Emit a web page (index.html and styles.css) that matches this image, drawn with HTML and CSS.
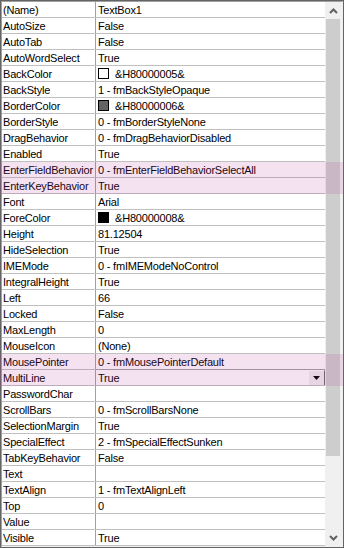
FILE: index.html
```html
<!DOCTYPE html>
<html lang="en">
<head>
  <meta charset="UTF-8">
  <title>Properties - TextBox1</title>
  <link rel="stylesheet" href="styles.css">
</head>
<body>

<div class="window">
  <div class="inner">

    <!-- property grid -->
    <div class="grid">
      <div class="row"><div class="name">(Name)</div><div class="value">TextBox1</div></div>
      <div class="row"><div class="name">AutoSize</div><div class="value">False</div></div>
      <div class="row"><div class="name">AutoTab</div><div class="value">False</div></div>
      <div class="row"><div class="name">AutoWordSelect</div><div class="value">True</div></div>
      <div class="row"><div class="name">BackColor</div><div class="value"><span class="swatch white"></span>&amp;H80000005&amp;</div></div>
      <div class="row"><div class="name">BackStyle</div><div class="value">1 - fmBackStyleOpaque</div></div>
      <div class="row"><div class="name">BorderColor</div><div class="value"><span class="swatch grey"></span>&amp;H80000006&amp;</div></div>
      <div class="row"><div class="name">BorderStyle</div><div class="value">0 - fmBorderStyleNone</div></div>
      <div class="row"><div class="name">DragBehavior</div><div class="value">0 - fmDragBehaviorDisabled</div></div>
      <div class="row"><div class="name">Enabled</div><div class="value">True</div></div>
      <div class="row"><div class="name">EnterFieldBehavior</div><div class="value">0 - fmEnterFieldBehaviorSelectAll</div></div>
      <div class="row"><div class="name">EnterKeyBehavior</div><div class="value">True</div></div>
      <div class="row"><div class="name">Font</div><div class="value">Arial</div></div>
      <div class="row"><div class="name">ForeColor</div><div class="value"><span class="swatch black"></span>&amp;H80000008&amp;</div></div>
      <div class="row"><div class="name">Height</div><div class="value">81.12504</div></div>
      <div class="row"><div class="name">HideSelection</div><div class="value">True</div></div>
      <div class="row"><div class="name">IMEMode</div><div class="value">0 - fmIMEModeNoControl</div></div>
      <div class="row"><div class="name">IntegralHeight</div><div class="value">True</div></div>
      <div class="row"><div class="name">Left</div><div class="value">66</div></div>
      <div class="row"><div class="name">Locked</div><div class="value">False</div></div>
      <div class="row"><div class="name">MaxLength</div><div class="value">0</div></div>
      <div class="row"><div class="name">MouseIcon</div><div class="value">(None)</div></div>
      <div class="row"><div class="name">MousePointer</div><div class="value">0 - fmMousePointerDefault</div></div>
      <div class="row"><div class="name">MultiLine</div><div class="value editing">True<span class="dropbtn"><svg width="7" height="4" viewBox="0 0 7 4"><path d="M0 0h7L3.5 4z" fill="#000"/></svg></span></div></div>
      <div class="row"><div class="name">PasswordChar</div><div class="value"></div></div>
      <div class="row"><div class="name">ScrollBars</div><div class="value">0 - fmScrollBarsNone</div></div>
      <div class="row"><div class="name">SelectionMargin</div><div class="value">True</div></div>
      <div class="row"><div class="name">SpecialEffect</div><div class="value">2 - fmSpecialEffectSunken</div></div>
      <div class="row"><div class="name">TabKeyBehavior</div><div class="value">False</div></div>
      <div class="row"><div class="name">Text</div><div class="value"></div></div>
      <div class="row"><div class="name">TextAlign</div><div class="value">1 - fmTextAlignLeft</div></div>
      <div class="row"><div class="name">Top</div><div class="value">0</div></div>
      <div class="row"><div class="name">Value</div><div class="value"></div></div>
      <div class="row"><div class="name">Visible</div><div class="value">True</div></div>
    </div>

    <!-- vertical scrollbar -->
    <div class="scrollbar">
      <div class="arrow">
        <svg width="9" height="6" viewBox="0 0 9 6"><polyline points="1,5 4.5,1.5 8,5" fill="none" stroke="#606060" stroke-width="2"/></svg>
      </div>
      <div class="track">
        <div class="thumb"></div>
      </div>
      <div class="arrow">
        <svg width="9" height="6" viewBox="0 0 9 6"><polyline points="1,1 4.5,4.5 8,1" fill="none" stroke="#606060" stroke-width="2"/></svg>
      </div>
    </div>

  </div>

  <!-- pink marker bands over the rows -->
  <div class="band band-enter"></div>
  <div class="band band-mouse"></div>
</div>

</body>
</html>
```

FILE: styles.css
```css
body { margin: 0; background: #fff; font-family: "Liberation Sans", Arial, sans-serif; font-size: 11px; letter-spacing: -0.2px; color: #000; }

.window {
  position: relative;
  width: 344px;
  height: 548px;
  box-sizing: border-box;
  border: 1px solid #646464;
}
.inner {
  display: flex;
  height: 100%;
  box-sizing: border-box;
  border: 1px solid #a0a0a0;
  border-right-color: #f0f0f0;
  border-bottom-color: #f0f0f0;
}

/* property grid */
.grid { width: 323px; }
.row {
  display: grid;
  grid-template-columns: 94px 1fr;
  height: 16px;
  box-sizing: border-box;
  border-bottom: 1px solid #c0c0c0;
  line-height: 16px;
}
.name {
  padding-left: 1px;
  border-right: 1px solid #a0a0a0;
  white-space: nowrap;
  overflow: hidden;
}
.value {
  position: relative;
  display: flex;
  align-items: center;
  padding-left: 2px;
  white-space: nowrap;
  overflow: hidden;
}
.value.editing { border-top: 1px solid #a0a0a0; margin-top: -1px; }

.swatch {
  width: 9px;
  height: 9px;
  border: 1px solid #000;
  margin-right: 6px;
}
.swatch.white { background: #fff; }
.swatch.grey { background: #646464; }
.swatch.black { background: #000; }

.dropbtn {
  position: absolute;
  right: 0;
  top: 0;
  width: 15px;
  height: 14px;
  display: flex;
  align-items: center;
  justify-content: center;
  background: #f0f0f0;
  border: 1px solid;
  border-color: #fff #696969 #696969 #fff;
}

/* scrollbar */
.scrollbar {
  width: 17px;
  display: flex;
  flex-direction: column;
  background: #f0f0f0;
}
.arrow {
  height: 17px;
  display: flex;
  align-items: center;
  justify-content: center;
}
.track { flex: 1; padding: 0 1px; }
.thumb { height: 437px; background: #cdcdcd; margin-right: 1px; }

/* marker bands */
.band {
  position: absolute;
  left: -1px;
  right: -1px;
  height: 32px;
  background: rgba(190, 60, 160, 0.15);
}
.band-enter { top: 161px; }
.band-mouse { top: 353px; }
```
